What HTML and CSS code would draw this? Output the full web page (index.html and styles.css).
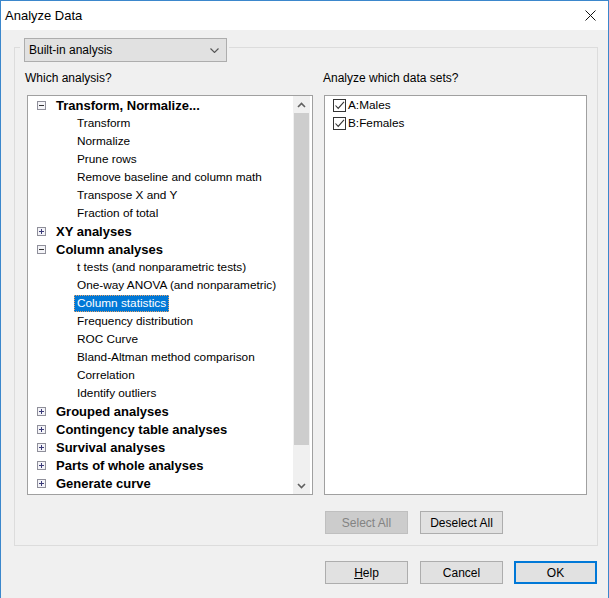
FILE: index.html
```html
<!DOCTYPE html>
<html>
<head>
<meta charset="utf-8">
<link rel="stylesheet" href="styles.css">
</head>
<body>
<div class="window">
  <div class="titlebar">
    <span class="title">Analyze Data</span>
    <svg class="close" width="11" height="11" viewBox="0 0 11 11"><path d="M0.5 0.5 L10.5 10.5 M10.5 0.5 L0.5 10.5" stroke="#111" stroke-width="1" fill="none"/></svg>
  </div>
  <div class="body">
    <div class="group">
      <div class="legend">
        <div class="combo">
          <span>Built-in analysis</span>
          <svg width="9" height="5" viewBox="0 0 9 5"><path d="M0.5 0.5 L4.5 4.5 L8.5 0.5" stroke="#555" stroke-width="1.1" fill="none"/></svg>
        </div>
      </div>
      <div class="panels">
        <div class="label label-left">Which analysis?</div>
        <div class="label label-right">Analyze which data sets?</div>
        <div class="tree">
          <div class="tree-items">
            <div class="row head"><svg class="exp" width="9" height="9" viewBox="0 0 9 9"><rect x="0.5" y="0.5" width="8" height="8" class="exp-box"/><path d="M2 4.5 H7" class="minus"/></svg><span>Transform, Normalize...</span></div>
            <div class="row child"><span>Transform</span></div>
            <div class="row child"><span>Normalize</span></div>
            <div class="row child"><span>Prune rows</span></div>
            <div class="row child"><span>Remove baseline and column math</span></div>
            <div class="row child"><span>Transpose X and Y</span></div>
            <div class="row child"><span>Fraction of total</span></div>
            <div class="row head"><svg class="exp" width="9" height="9" viewBox="0 0 9 9"><rect x="0.5" y="0.5" width="8" height="8" class="exp-box"/><path d="M2 4.5 H7 M4.5 2 V7" class="plus"/></svg><span>XY analyses</span></div>
            <div class="row head"><svg class="exp" width="9" height="9" viewBox="0 0 9 9"><rect x="0.5" y="0.5" width="8" height="8" class="exp-box"/><path d="M2 4.5 H7" class="minus"/></svg><span>Column analyses</span></div>
            <div class="row child"><span>t tests (and nonparametric tests)</span></div>
            <div class="row child"><span>One-way ANOVA (and nonparametric)</span></div>
            <div class="row child"><span class="selected">Column statistics</span></div>
            <div class="row child"><span>Frequency distribution</span></div>
            <div class="row child"><span>ROC Curve</span></div>
            <div class="row child"><span>Bland-Altman method comparison</span></div>
            <div class="row child"><span>Correlation</span></div>
            <div class="row child"><span>Identify outliers</span></div>
            <div class="row head"><svg class="exp" width="9" height="9" viewBox="0 0 9 9"><rect x="0.5" y="0.5" width="8" height="8" class="exp-box"/><path d="M2 4.5 H7 M4.5 2 V7" class="plus"/></svg><span>Grouped analyses</span></div>
            <div class="row head"><svg class="exp" width="9" height="9" viewBox="0 0 9 9"><rect x="0.5" y="0.5" width="8" height="8" class="exp-box"/><path d="M2 4.5 H7 M4.5 2 V7" class="plus"/></svg><span>Contingency table analyses</span></div>
            <div class="row head"><svg class="exp" width="9" height="9" viewBox="0 0 9 9"><rect x="0.5" y="0.5" width="8" height="8" class="exp-box"/><path d="M2 4.5 H7 M4.5 2 V7" class="plus"/></svg><span>Survival analyses</span></div>
            <div class="row head"><svg class="exp" width="9" height="9" viewBox="0 0 9 9"><rect x="0.5" y="0.5" width="8" height="8" class="exp-box"/><path d="M2 4.5 H7 M4.5 2 V7" class="plus"/></svg><span>Parts of whole analyses</span></div>
            <div class="row head"><svg class="exp" width="9" height="9" viewBox="0 0 9 9"><rect x="0.5" y="0.5" width="8" height="8" class="exp-box"/><path d="M2 4.5 H7 M4.5 2 V7" class="plus"/></svg><span>Generate curve</span></div>
          </div>
          <div class="vscroll">
            <div class="arrow"><svg width="9" height="6" viewBox="0 0 9 6"><path d="M1 5 L4.5 1.5 L8 5" stroke="#606060" stroke-width="1.6" fill="none"/></svg></div>
            <div class="track"><div class="thumb"></div></div>
            <div class="arrow"><svg width="9" height="6" viewBox="0 0 9 6"><path d="M1 1 L4.5 4.5 L8 1" stroke="#606060" stroke-width="1.6" fill="none"/></svg></div>
          </div>
        </div>
        <div class="datalist">
          <div class="check-row"><svg class="cb" width="13" height="13" viewBox="0 0 13 13"><rect x="0.5" y="0.5" width="12" height="12" fill="#fff" stroke="#333"/><path d="M2.5 6.5 L5.2 9.4 L11 2.8" stroke="#333" stroke-width="1.1" fill="none"/></svg><span>A:Males</span></div>
          <div class="check-row"><svg class="cb" width="13" height="13" viewBox="0 0 13 13"><rect x="0.5" y="0.5" width="12" height="12" fill="#fff" stroke="#333"/><path d="M2.5 6.5 L5.2 9.4 L11 2.8" stroke="#333" stroke-width="1.1" fill="none"/></svg><span>B:Females</span></div>
        </div>
        <div></div>
        <div class="btn-row">
          <button class="btn" disabled>Select All</button>
          <button class="btn">Deselect All</button>
        </div>
      </div>
    </div>
    <div class="footer">
      <button class="btn"><u>H</u>elp</button>
      <button class="btn">Cancel</button>
      <button class="btn default">OK</button>
    </div>
  </div>
</div>
</body>
</html>
```

FILE: styles.css
```css
* { box-sizing: border-box; }

html, body {
  margin: 0;
  padding: 0;
  background: #f0f0f0;
}

body {
  font-family: "Liberation Sans", Arial, sans-serif;
  color: #000;
}

.window {
  width: 609px;
  height: 598px;
  border: 1px solid #3b87cc;
  border-bottom: 0;
  background: #f0f0f0;
  display: flex;
  flex-direction: column;
  overflow: hidden;
}

.titlebar {
  height: 29px;
  flex: 0 0 29px;
  background: #fff;
  display: flex;
  align-items: center;
  justify-content: space-between;
  padding: 0 12px 0 4px;
  font-size: 13px;
}

.close { display: block; }

.body {
  flex: 1;
  padding: 17px 10px 0 13px;
}

.group {
  height: 499px;
  border: 1px solid #dcdcdc;
  padding: 0 9px 0 12px;
}

.legend {
  margin-top: -10px;
  margin-left: -7px;
  padding: 0 2px 0 4px;
  background: #f0f0f0;
  width: fit-content;
}

.combo {
  width: 203px;
  height: 24px;
  border: 1px solid #adadad;
  background: #e1e1e1;
  display: flex;
  align-items: center;
  justify-content: space-between;
  padding: 0 7px 0 4px;
  font-size: 12px;
}

.combo svg { display: block; }

.panels {
  display: grid;
  grid-template-columns: 286px 263px;
  grid-template-rows: auto 400px auto;
  column-gap: 11px;
  margin-top: 9px;
}

.label {
  font-size: 12px;
  line-height: 15px;
  height: 15px;
  margin-bottom: 9px;
}

.label-left { margin-left: -2px; }
.label-right { margin-left: -1px; }

.tree {
  border: 1px solid #a0a0a0;
  background: #fff;
  display: flex;
  overflow: hidden;
}

.tree-items {
  flex: 1;
}

.row {
  height: 18px;
  display: flex;
  align-items: center;
  white-space: nowrap;
}

.row.head {
  font-size: 13px;
  font-weight: bold;
  padding-left: 9px;
}

.exp {
  display: block;
  margin-right: 10px;
  flex: 0 0 9px;
}

.exp-box {
  fill: #f4f4f8;
  stroke: #8f8f9a;
}

.minus {
  stroke: #333;
  stroke-width: 1;
  fill: none;
}

.plus {
  stroke: #3b3b78;
  stroke-width: 1;
  fill: none;
}

.row.child {
  font-size: 11.8px;
  padding-left: 46px;
}

.row.child span {
  display: inline-block;
  line-height: 15px;
  padding: 0 2px;
  border: 1px solid transparent;
}

.row.child span.selected {
  background: #0078d7;
  color: #fff;
  border: 1px dotted #e9a46a;
}

.vscroll {
  width: 17px;
  flex: 0 0 17px;
  margin-right: 2px;
  background: #f0f0f0;
  display: flex;
  flex-direction: column;
}

.arrow {
  height: 17px;
  flex: 0 0 17px;
  display: flex;
  align-items: center;
  justify-content: center;
}

.arrow svg { display: block; }

.track {
  flex: 1;
  padding: 0 1px;
}

.thumb {
  height: 332px;
  background: #cdcdcd;
}

.datalist {
  border: 1px solid #a0a0a0;
  background: #fff;
}

.check-row {
  height: 18px;
  display: flex;
  align-items: center;
  padding-left: 8px;
  font-size: 11.8px;
}

.cb {
  display: block;
  margin-right: 2px;
}

.btn-row {
  display: flex;
  gap: 12px;
  margin-top: 16px;
  margin-left: 1px;
}

.btn {
  width: 83px;
  height: 23px;
  border: 1px solid #adadad;
  background: #e1e1e1;
  font-family: "Liberation Sans", Arial, sans-serif;
  font-size: 12px;
  color: #000;
  padding: 0;
  margin: 0;
}

.btn:disabled {
  background: #cccccc;
  border-color: #bfbfbf;
  color: #838383;
}

.btn u { text-decoration: underline; }

.footer {
  display: flex;
  justify-content: flex-end;
  gap: 12px;
  margin-top: 15px;
  padding-right: 1px;
}

.btn.default {
  border: 2px solid #0078d7;
  margin-left: -1px;
}
```
